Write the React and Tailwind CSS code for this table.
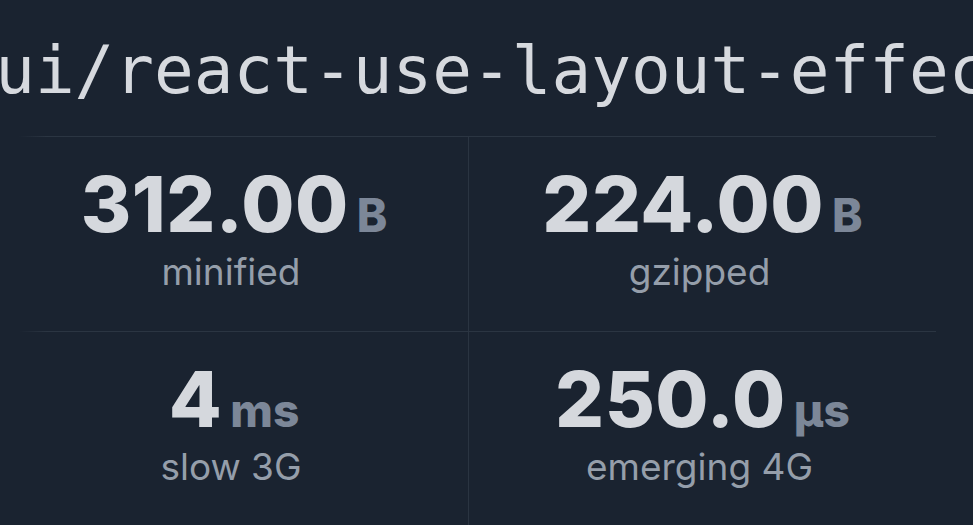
import React from "react";

const stats = [
  [
    { value: "312.00", unit: "B", label: "minified" },
    { value: "224.00", unit: "B", label: "gzipped" },
  ],
  [
    { value: "4", unit: "ms", label: "slow 3G" },
    { value: "250.0", unit: "µs", label: "emerging 4G" },
  ],
];

const Stat = ({ stat, divider }) => (
  <div className={`flex flex-col items-center pt-[29px] ${divider ? "border-l border-[#2a3441]" : ""}`}>
    <div className="flex items-baseline">
      <span className="text-[77px] leading-none font-extrabold text-[#d5d8dd] tracking-[0.5px]">{stat.value}</span>
      <span className="ml-[8px] text-[46px] leading-none font-extrabold text-[#7c8798]">{stat.unit}</span>
    </div>
    <span className="mt-[10px] pr-[6px] text-[37px] leading-none font-normal text-[#959eaa]">{stat.label}</span>
  </div>
);

const Divider = () => (
  <div className="ml-[19px] w-[917px] h-px bg-gradient-to-r from-[#1a2330] via-[#2b3542] via-[3%] to-[#2b3542]" />
);

export default function App() {
  return (
    <div className="w-[973px] h-[525px] overflow-hidden bg-[#1a2330] font-['Inter','Liberation_Sans',sans-serif]">
      {/* Package name */}
      <div className="h-[136px] overflow-hidden whitespace-nowrap pt-[38px]">
        <h1 className="ml-[-283px] text-[66px] leading-none font-normal text-[#d6d9de] font-['DejaVu_Sans_Mono',monospace]">
          @radix-ui/react-use-layout-effect
        </h1>
      </div>

      {stats.map((row, i) => (
        <div key={i}>
          <Divider />
          <div className="grid grid-cols-[468px_468px] h-[194px]">
            {row.map((stat, j) => (
              <Stat key={stat.label} stat={stat} divider={j === 1} />
            ))}
          </div>
        </div>
      ))}
    </div>
  );
}
